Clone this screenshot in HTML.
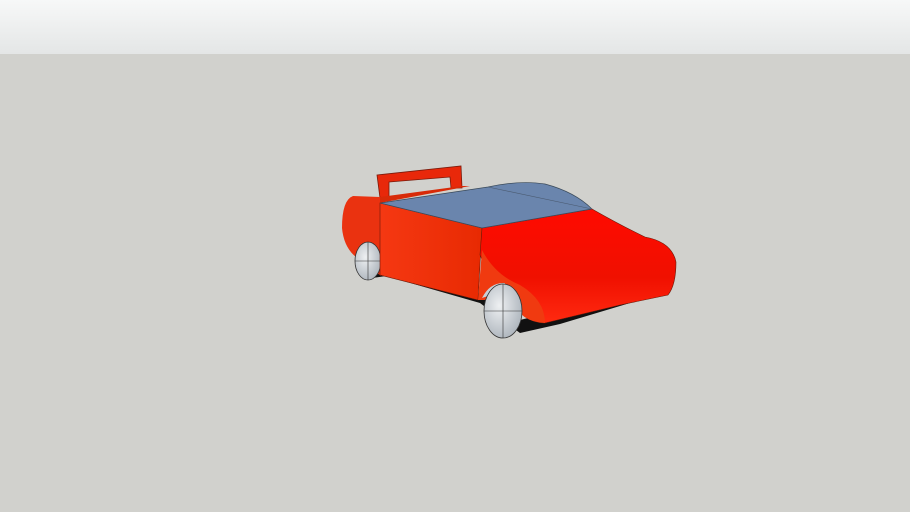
<!DOCTYPE html>
<html><head><style>
html,body{margin:0;padding:0;width:910px;height:512px;overflow:hidden;background:#d1d1cd}
.sky{position:absolute;left:0;top:0;width:910px;height:54px;background:linear-gradient(#f7f8f8,#e4e6e6)}
svg{position:absolute;left:0;top:0}
</style></head><body>
<div class="sky"></div>
<svg width="910" height="512" viewBox="0 0 910 512">
<defs>
<linearGradient id="side" x1="0" y1="0" x2="1" y2="0"><stop offset="0" stop-color="#f53812"/><stop offset="1" stop-color="#e82a02"/></linearGradient>
<linearGradient id="front" x1="0" y1="0" x2="0" y2="1"><stop offset="0" stop-color="#ff0a00"/><stop offset="0.6" stop-color="#f01000"/><stop offset="1" stop-color="#ff2a10"/></linearGradient>
<radialGradient id="wh" cx="0.4" cy="0.4" r="0.7"><stop offset="0" stop-color="#eef0f2"/><stop offset="1" stop-color="#a8b0b8"/></radialGradient>
</defs>
<path d="M360 268 L400 280 L480 303 L520 333 L560 324 L630 303 L600 300 L520 320 L490 300 L400 262 Z" fill="#111"/>
<path d="M372 278 L400 274 L402 262 L372 266 Z" fill="#111"/>
<path d="M377 175 L461 166 L462 188 L451 188 L450 177 L389 182 L389 198 L380 198 Z" fill="#e8280a" stroke="#7a1a0a" stroke-width="0.8"/>
<path d="M353 196 L380 197 L381 276 L360 260 Q344 250 342 228 Q342 200 353 196 Z" fill="#ea3210"/>
<path d="M380 197 L462 186 L470 186 L380 203 Z" fill="#d82a08"/>
<ellipse cx="368" cy="261" rx="13" ry="19" fill="url(#wh)" stroke="#333" stroke-width="0.8"/>
<path d="M355 261 H381 M368 242 V280" stroke="#333" stroke-width="0.6"/>
<path d="M380 203 L482 228 L478 300 L380 275 Z" fill="url(#side)" stroke="#6a1a0a" stroke-width="0.6"/>
<path d="M482 228 L592 209 Q620 225 645 237 Q672 242 676 262 Q676 285 668 295 L620 305 L545 323 Q520 322 520 300 Q520 282 500 278 Q486 270 480 255 Z" fill="url(#front)" stroke="#6a1a0a" stroke-width="0.6"/>
<path d="M482 250 Q495 275 520 285 Q545 300 545 323 Q520 322 512 300 L478 300 Z" fill="#f03a10"/>
<path d="M380 203 L488 187 Q520 180 545 184 Q575 192 592 209 L482 228 Z" fill="#6a85ad" stroke="#3a4a5a" stroke-width="0.7"/>
<path d="M488 187 L592 209" stroke="#4a5a70" stroke-width="0.6" fill="none"/>
<path d="M482 298 Q490 282 505 283 L500 292 Z" fill="#c8d0d6"/>
<ellipse cx="503" cy="311" rx="19" ry="27" fill="url(#wh)" stroke="#333" stroke-width="0.8"/>
<path d="M484 311 H522 M503 284 V338" stroke="#333" stroke-width="0.6"/>
</svg>
</body></html>
